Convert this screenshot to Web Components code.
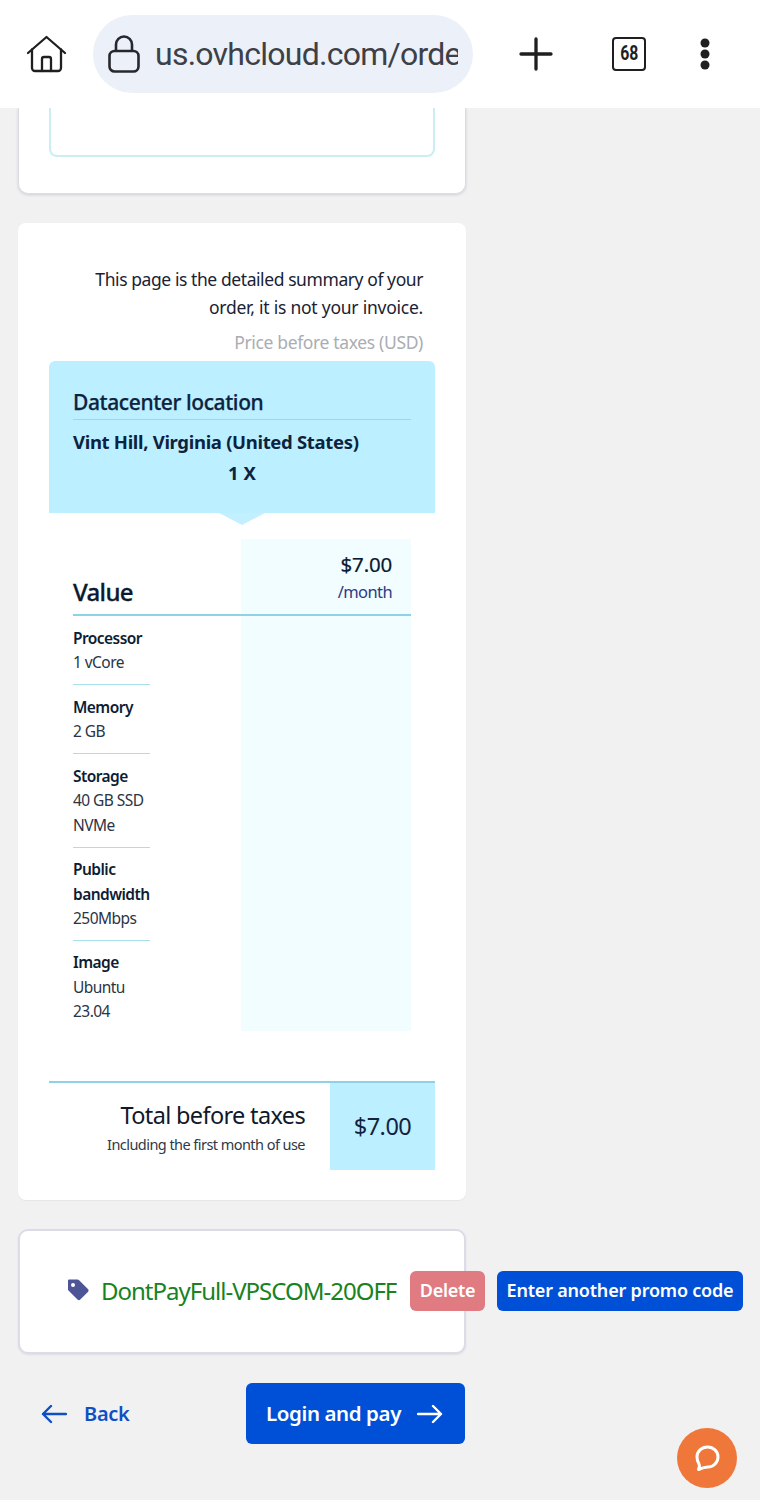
<!DOCTYPE html>
<html>
<head>
<meta charset="utf-8">
<title>Order summary</title>
<style>
  html, body { margin: 0; background: #f1f1f2; }
  body { font-family: "Noto Sans", "Liberation Sans", sans-serif; color: #0b1a33; width: 760px; height: 1500px; overflow: hidden; position: relative; }
</style>
</head>
<body>
<browser-bar url="us.ovhcloud.com/order" tabs="68"></browser-bar>
<order-page>
  <order-card slot="top" kind="clipped"></order-card>
  <order-summary></order-summary>
  <promo-card code="DontPayFull-VPSCOM-20OFF"></promo-card>
  <order-actions></order-actions>
</order-page>
<chat-bubble></chat-bubble>

<script>
class BrowserBar extends HTMLElement {
  connectedCallback () {
    const root = this.attachShadow({ mode: 'open' })
    root.innerHTML = `
      <style>
        :host { display: flex; align-items: center; height: 108px; background: #fff; box-sizing: border-box; padding: 15px 0; position: relative; z-index: 2; }
        .home { margin-left: 26px; width: 41px; height: 40px; flex: none; }
        .pill { margin-left: 26px; width: 380px; height: 78px; flex: none; box-sizing: border-box; border-radius: 39px; background: #ecf0f9; display: flex; align-items: center; padding: 0 15px 0 14px; }
        .pill svg { width: 34px; height: 38px; flex: none; margin-top: -1px; }
        .url { margin-left: 14px; font: 400 32px/40px Roboto, sans-serif; color: #3d4047; white-space: nowrap; overflow: hidden; flex: 1; letter-spacing: -0.75px; }
        .plus { margin-left: 45px; width: 36px; height: 36px; flex: none; }
        .tabs { margin-left: 58px; width: 34px; height: 34px; flex: none; box-sizing: border-box; border: 2.5px solid #1f1f1f; border-radius: 4px; font: 700 18px/28px Roboto, sans-serif; color: #1f1f1f; text-align: center; }
        .tabs span { display: inline-block; transform: scale(.88, 1.12); }
        .more { margin-left: 54px; width: 10px; height: 32px; flex: none; }
      </style>
      <svg class="home" viewBox="0 0 41 40" fill="none" stroke="#1f1f1f" stroke-width="2.300" stroke-linejoin="round" stroke-linecap="round">
        <path d="M2 19 20.500 3 39 19"/>
        <path d="M6 15.500V34a3 3 0 0 0 3 3h23a3 3 0 0 0 3-3V15.500"/>
        <path d="M16 37V25a2 2 0 0 1 2-2h5a2 2 0 0 1 2 2v12"/>
      </svg>
      <div class="pill">
        <svg viewBox="0 0 34 38" fill="none" stroke="#26282d" stroke-width="2.600">
          <path d="M9 16V9.500a8 8 0 0 1 16 0V16"/>
          <rect x="2.500" y="16" width="29" height="20.500" rx="5"/>
        </svg>
        <span class="url">${this.getAttribute('url')}</span>
      </div>
      <svg class="plus" viewBox="0 0 36 36" stroke="#1f1f1f" stroke-width="3.300" stroke-linecap="round">
        <path d="M18 3v30M3 18h30"/>
      </svg>
      <div class="tabs"><span>${this.getAttribute('tabs')}</span></div>
      <svg class="more" viewBox="0 0 10 32" fill="#1f1f1f">
        <circle cx="5" cy="5" r="4.500"/><circle cx="5" cy="16" r="4.500"/><circle cx="5" cy="27" r="4.500"/>
      </svg>
    `
  }
}

class OrderPage extends HTMLElement {
  connectedCallback () {
    const root = this.attachShadow({ mode: 'open' })
    root.innerHTML = `
      <style>
        :host { display: flex; flex-direction: column; width: 448px; margin-left: 18px; gap: 29px; }
      </style>
      <slot name="top"></slot>
      <slot></slot>
    `
  }
}

class OrderCard extends HTMLElement {
  connectedCallback () {
    const root = this.attachShadow({ mode: 'open' })
    root.innerHTML = `
      <style>
        :host { display: block; box-sizing: border-box; background: #fff; height: 86px; padding: 0 30px 36px; border-radius: 0 0 10px 10px; border: 1px solid #dcdce6; border-top: 0; box-shadow: 0 1px 3px rgba(60, 60, 90, .18); }
        .inner { height: 100%; box-sizing: border-box; border: 2px solid #c9eff5; border-top: 0; border-radius: 0 0 8px 8px; }
      </style>
      <div class="inner"></div>
    `
  }
}

class OrderSummary extends HTMLElement {
  connectedCallback () {
    const root = this.attachShadow({ mode: 'open' })
    const specs = [
      ['Processor', '1 vCore'],
      ['Memory', '2 GB'],
      ['Storage', '40 GB SSD<br>NVMe'],
      ['Public<br>bandwidth', '250Mbps'],
      ['Image', 'Ubuntu<br>23.04']
    ]
    root.innerHTML = `
      <style>
        :host { display: block; box-sizing: border-box; background: #fff; height: 977px; padding: 42px 31px 0; border-radius: 8px; box-shadow: 0 1px 1px rgba(60, 60, 90, .06); }
        .note { text-align: right; padding-right: 12px; font-size: 17.500px; line-height: 28px; letter-spacing: -0.42px; color: #1a2233; }
        .note span { letter-spacing: -0.24px; }
        .before { text-align: right; padding-right: 12px; font-size: 17.500px; line-height: 24px; margin-top: 9px; letter-spacing: -0.35px; color: #aaadb3; }
        .loc { position: relative; margin-top: 7px; background: #bcefff; height: 152px; box-sizing: border-box; border-radius: 6px 6px 0 0; padding: 27px 24px 0; }
        .loc h3 { margin: 0; font-size: 21px; line-height: 28px; font-weight: 500; -webkit-text-stroke: .25px #0c2340; padding-bottom: 3px; border-bottom: 1px solid #97dbe9; letter-spacing: -0.4px; color: #0c2340; }
        .loc .dc { font-size: 18.500px; line-height: 26px; font-weight: 700; margin-top: 9px; letter-spacing: -0.32px; color: #0c2340; }
        .loc .qty { font-size: 18.500px; line-height: 26px; font-weight: 700; text-align: center; margin-top: 5px; color: #0c2340; }
        .loc::after { content: ""; position: absolute; left: 170px; top: 100%; border: solid transparent; border-width: 12px 23px 0; border-top-color: #c3f0ff; }
        .plan { margin: 26px 24px 0; display: grid; grid-template-columns: 168px 170px; grid-template-rows: auto minmax(0, 1fr); height: 492px; }
        .value { grid-column: 1; grid-row: 1; align-self: end; font-size: 24px; line-height: 32px; font-weight: 500; -webkit-text-stroke: .3px #0a1a30; letter-spacing: -0.7px; padding-bottom: 8px; color: #0a1a30; }
        .head { grid-column: 2; grid-row: 1; text-align: right; padding: 11px 19px 10px 0; }
        .head b { display: block; font-size: 20.500px; line-height: 28px; font-weight: 400; -webkit-text-stroke: .2px #0a1a30; letter-spacing: -0.2px; color: #0a1a30; }
        .head span { display: block; font-size: 16.500px; line-height: 28px; letter-spacing: -0.6px; color: #2b3a83; }
        .col { grid-column: 2; grid-row: 1 / 3; background: #f2fdff; z-index: 0; }
        .rule { grid-column: 1 / 3; grid-row: 1; align-self: end; height: 2px; background: #8fd2e8; position: relative; z-index: 1; }
        .head, .value { position: relative; z-index: 1; }
        .specs { grid-column: 1; grid-row: 2; width: 77px; padding-top: 10px; position: relative; z-index: 1; }
        .spec { font-size: 15.500px; line-height: 24.300px; letter-spacing: -0.55px; color: #2a3444; padding-bottom: 9.700px; margin-bottom: 9.700px; border-bottom: 1px solid #a8dfec; white-space: nowrap; }
        .spec:last-child { border-bottom: 0; margin: 0; }
        .spec b { display: block; font-weight: 600; color: #0e1c34; }
        .total { display: flex; margin-top: 50px; border-top: 2px solid #8fd2e8; height: 87px; }
        .total .lab { flex: 1; text-align: right; padding: 16px 25px 0 0; }
        .total .lab div { font-size: 23.500px; line-height: 32px; letter-spacing: -0.65px; color: #10192a; }
        .total .lab small { display: block; font-size: 14.500px; line-height: 26px; letter-spacing: -0.55px; color: #2f3848; }
        .total .amt { width: 105px; background: #bcefff; display: flex; align-items: center; justify-content: center; padding-bottom: 2px; box-sizing: border-box; font-size: 23.500px; letter-spacing: -0.5px; color: #12233d; }
      </style>
      <div class="note">This page is the detailed summary of your<br><span>order, it is not your invoice.</span></div>
      <div class="before">Price before taxes (USD)</div>
      <div class="loc">
        <h3>Datacenter location</h3>
        <div class="dc">Vint Hill, Virginia (United States)</div>
        <div class="qty">1 X</div>
      </div>
      <div class="plan">
        <div class="col"></div>
        <div class="value">Value</div>
        <div class="head"><b>$7.00</b><span>/month</span></div>
        <div class="rule"></div>
        <div class="specs">
          ${specs.map(s => `<div class="spec"><b>${s[0]}</b>${s[1]}</div>`).join('')}
        </div>
      </div>
      <div class="total">
        <div class="lab"><div>Total before taxes</div><small>Including the first month of use</small></div>
        <div class="amt">$7.00</div>
      </div>
    `
  }
}

class PromoCard extends HTMLElement {
  connectedCallback () {
    const root = this.attachShadow({ mode: 'open' })
    root.innerHTML = `
      <style>
        :host { display: flex; align-items: center; box-sizing: border-box; height: 125px; background: #fff; border: 2px solid #dcdce8; border-radius: 10px; padding: 0 0 1px 47px; white-space: nowrap; box-shadow: 0 1px 2px rgba(60, 60, 90, .1); }
        svg { width: 22px; height: 22px; flex: none; margin-top: -2px; }
        .code { margin-left: 12px; font-size: 24px; line-height: 30px; margin-top: -1px; letter-spacing: -1px; color: #17821e; width: 297px; flex: none; }
        .btn { box-sizing: border-box; height: 40px; flex: none; border-radius: 6px; color: #fff; font-size: 18px; font-weight: 600; line-height: 38px; text-align: center; letter-spacing: -0.2px; }
        .del { margin-left: 12px; width: 75px; background: #e07b81; letter-spacing: -0.3px; }
        .other { margin-left: 12px; width: 246px; background: #0050d7; }
      </style>
      <svg viewBox="0 0 22 22"><path fill="#4d5597" d="M1 1.500a1 1 0 0 1 1-1h8.500a2 2 0 0 1 1.400.6l9 9a2 2 0 0 1 0 2.800l-7.600 7.600a2 2 0 0 1-2.800 0l-9-9a2 2 0 0 1-.5-1.400z"/><circle cx="6" cy="6" r="2" fill="#fff"/></svg>
      <span class="code">${this.getAttribute('code')}</span>
      <div class="btn del">Delete</div>
      <div class="btn other">Enter another promo code</div>
    `
  }
}

class OrderActions extends HTMLElement {
  connectedCallback () {
    const root = this.attachShadow({ mode: 'open' })
    root.innerHTML = `
      <style>
        :host { display: flex; align-items: center; justify-content: space-between; height: 61px; padding-right: 1px; }
        .back { display: flex; align-items: center; margin-left: 23px; color: #0e50c4; font-size: 20px; font-weight: 600; letter-spacing: -0.3px; }
        .back svg { margin-right: 17px; }
        .pay { display: flex; align-items: center; justify-content: center; box-sizing: border-box; width: 219px; height: 61px; padding: 0 2px 2px 0; border-radius: 6px; background: #0050d7; color: #fff; font-size: 20.500px; font-weight: 600; letter-spacing: -0.4px; }
        .pay svg { margin-left: 16px; margin-top: 2px; }
      </style>
      <div class="back">
        <svg width="26" height="20" viewBox="0 0 26 20" fill="none" stroke="#0e50c4" stroke-width="2.400" stroke-linecap="round" stroke-linejoin="round"><path d="M25 10H2M10 2l-8 8 8 8"/></svg>
        Back
      </div>
      <div class="pay">
        Login and pay
        <svg width="26" height="20" viewBox="0 0 26 20" fill="none" stroke="#fff" stroke-width="2.400" stroke-linecap="round" stroke-linejoin="round"><path d="M1 10h23M16 2l8 8-8 8"/></svg>
      </div>
    `
  }
}

class ChatBubble extends HTMLElement {
  connectedCallback () {
    const root = this.attachShadow({ mode: 'open' })
    root.innerHTML = `
      <style>
        :host { position: absolute; left: 677px; top: 1428px; width: 60px; height: 60px; border-radius: 50%; background: #f0773a; display: flex; align-items: center; justify-content: center; }
      </style>
      <svg width="28" height="28" viewBox="0 0 28 28" fill="none" stroke="#fff" stroke-width="3" stroke-linejoin="round">
        <path d="M14.500 3C20.500 3 25 7.500 25 13s-4.500 10-10 10c-3 0-6 1-9.500 2.500 1-2.500 1.500-4 .5-5.500C4.500 18 4 15.500 4 13 4 7.500 8.500 3 14.500 3z"/>
      </svg>
    `
  }
}

window.customElements.define('browser-bar', BrowserBar)
window.customElements.define('order-page', OrderPage)
window.customElements.define('order-card', OrderCard)
window.customElements.define('order-summary', OrderSummary)
window.customElements.define('promo-card', PromoCard)
window.customElements.define('order-actions', OrderActions)
window.customElements.define('chat-bubble', ChatBubble)
</script>
</body>
</html>
